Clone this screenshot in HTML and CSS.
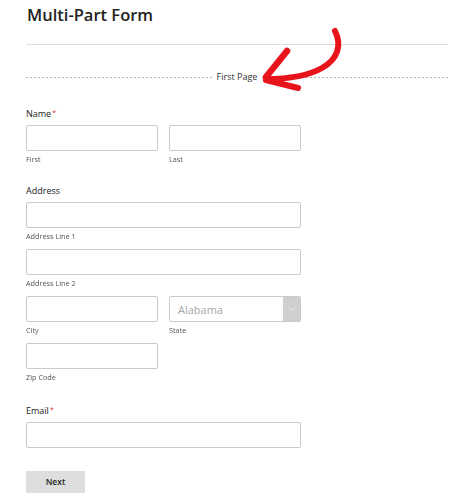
FILE: index.html
```html
<!DOCTYPE html>
<html>
<head>
<meta charset="utf-8">
<link rel="stylesheet" href="styles.css">
</head>
<body>
<div class="page">
  <h1 class="title">Multi-Part Form</h1>
  <div class="rule"></div>
  <div class="pagebreak">
    <span class="dots"></span>
    <span class="pb-text">First Page</span>
    <span class="dots"></span>
  </div>

  <div class="field">
    <div class="label">Name<span class="req">*</span></div>
    <div class="row">
      <div class="col">
        <div class="input"></div>
        <div class="sub">First</div>
      </div>
      <div class="col">
        <div class="input"></div>
        <div class="sub">Last</div>
      </div>
    </div>
  </div>

  <div class="field">
    <div class="label">Address</div>
    <div class="stack">
      <div class="full">
        <div class="input"></div>
        <div class="sub">Address Line 1</div>
      </div>
      <div class="full">
        <div class="input"></div>
        <div class="sub">Address Line 2</div>
      </div>
      <div class="row">
        <div class="col">
          <div class="input"></div>
          <div class="sub">City</div>
        </div>
        <div class="col">
          <div class="select">
            <span class="sel-text">Alabama</span>
            <span class="sel-arrow">
              <svg width="9" height="6" viewBox="0 0 9 6"><path d="M1 1 L4.5 4.5 L8 1" fill="none" stroke="#e6e6e6" stroke-width="1"/></svg>
            </span>
          </div>
          <div class="sub">State</div>
        </div>
      </div>
      <div class="col">
        <div class="input"></div>
        <div class="sub">Zip Code</div>
      </div>
    </div>
  </div>

  <div class="field email">
    <div class="label">Email<span class="req">*</span></div>
    <div class="input wide"></div>
  </div>

  <div class="btn">Next</div>

  <svg class="arrow" width="474" height="120" viewBox="0 0 474 120">
    <path d="M335 31 C342 45 338 59 322 68 C306 77 286 79 266 79" fill="none" stroke="#e8141b" stroke-width="6" stroke-linecap="round"/>
    <path d="M287 51 L266 77" fill="none" stroke="#e8141b" stroke-width="6.5" stroke-linecap="round"/>
    <path d="M266 80 L298 88" fill="none" stroke="#e8141b" stroke-width="6" stroke-linecap="round"/>
  </svg>
</div>
</body>
</html>
```

FILE: styles.css
```css
* { box-sizing: border-box; }
html, body { margin: 0; padding: 0; background: #fff; }
body {
  font-family: "Open Sans", "Noto Sans", sans-serif;
  color: #333;
  -webkit-font-smoothing: antialiased;
}

.page {
  position: relative;
  width: 474px;
  height: 502px;
  padding: 0 26px;
  overflow: hidden;
}

.title {
  margin: 5px 0 0 1px;
  font-size: 16.5px;
  line-height: 20px;
  font-weight: 600;
  color: #222;
}

.rule {
  margin-top: 19px;
  width: 422px;
  height: 1px;
  background: #dcdcdc;
}

.pagebreak {
  margin-top: 25px;
  width: 422px;
  height: 14px;
  display: flex;
  align-items: center;
}
.dots {
  flex: 1;
  height: 1px;
  background: repeating-linear-gradient(to right, #b4b4b4 0 2px, transparent 2px 4px);
}
.pb-text {
  padding: 0 5px;
  font-size: 9px;
  line-height: 14px;
  color: #333;
}

.field { margin-top: 22px; }
.field + .field { margin-top: 19px; }
.field.email { margin-top: 20px; }

.label {
  font-size: 9px;
  line-height: 14px;
  color: #222;
  margin-bottom: 4px;
}
.req { color: #d63638; font-size: 7px; vertical-align: 2px; margin-left: 1px; }

.row { display: flex; gap: 11px; }
.col { width: 132px; }
.full { width: 275px; }
.stack { display: flex; flex-direction: column; gap: 7px; }

.input {
  height: 26px;
  border: 1px solid #cacaca;
  border-radius: 2px;
  background: #fff;
}
.input.wide { width: 275px; }

.sub {
  padding-top: 2px;
  font-size: 7.3px;
  line-height: 12px;
  color: #555;
  will-change: transform;
}

.select {
  height: 26px;
  border: 1px solid #cacaca;
  border-radius: 2px;
  display: flex;
  align-items: center;
  overflow: hidden;
}
.sel-text {
  flex: 1;
  padding-left: 8px;
  font-size: 11px;
  color: #a8a8a8;
}
.sel-arrow {
  width: 17px;
  align-self: stretch;
  background: #cfcfcf;
  display: flex;
  align-items: center;
  justify-content: center;
}

.btn {
  margin-top: 23px;
  width: 59px;
  height: 22px;
  background: #dedede;
  font-size: 8.5px;
  font-weight: 600;
  line-height: 22px;
  text-align: center;
  color: #222;
}

.arrow {
  position: absolute;
  left: 0;
  top: 0;
  pointer-events: none;
}
```
